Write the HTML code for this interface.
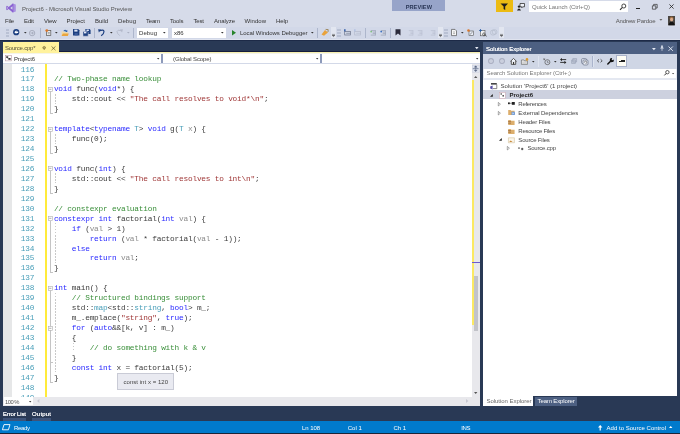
<!DOCTYPE html>
<html lang="en"><head><meta charset="utf-8"><title>Project6 - Microsoft Visual Studio Preview</title>
<style>
html,body{margin:0;padding:0;background:#293955;}
#r{position:relative;width:680px;height:434px;overflow:hidden;will-change:transform;font-family:"Liberation Sans",sans-serif;}
#r>div,#r>svg,#r>span{position:absolute;display:block;}
#r>svg{overflow:visible;}
.t{white-space:pre;}
.ln{font-family:"Liberation Mono",monospace;font-size:7.8px;line-height:10px;letter-spacing:-0.211px;color:#4a9fb9;text-align:right;white-space:pre;}
.cd{font-family:"Liberation Mono",monospace;font-size:7.8px;line-height:10px;letter-spacing:-0.211px;color:#3c3c3c;white-space:pre;}
.cd i{font-style:normal}
.k{color:#2a2aff}.cd .t{color:#4a9fb9}.s{color:#a03838}.c{color:#3a8f3a}.p{color:#8c8c8c}
</style></head>
<body><div id="r">
<div style="left:0px;top:0px;width:680px;height:40px;background:#d6dbe9;"></div>
<div style="left:0px;top:27px;width:680px;height:11.6px;background:#d2d8e8;"></div>
<div style="left:0px;top:38.6px;width:680px;height:0.9px;background:#dfe3ee;"></div>
<div style="left:0px;top:39.5px;width:680px;height:394.5px;background:#293955;"></div>
<span class="t" style="left:22px;top:5px;font-size:6px;line-height:8px;color:#555;letter-spacing:-0.031px;">Project6 - Microsoft Visual Studio Preview</span>
<svg style="left:6px;top:3px" width="10" height="10" viewBox="0 0 10 10"><path d="M6.6 0.4 L9.8 1.6 V8.4 L6.6 9.6 Z" fill="#a88fe0"/><path d="M6.8 0.4 L7.4 0.8 V9.2 L6.8 9.6 L2.6 5.9 L1 7.2 L0.3 6.8 V3.2 L1 2.8 L2.6 4.1 Z M6.6 3.2 L4.2 5 L6.6 6.8 Z M1.2 4.1 V5.9 L2.2 5 Z" fill="#8b63d2" fill-rule="evenodd"/></svg>
<div style="left:391.75px;top:0px;width:53.25px;height:11.25px;background:#97a4c9;"></div>
<span class="t" style="left:405.7px;top:3px;font-size:5.6px;line-height:8px;color:#2a3757;letter-spacing:0.079px;font-weight:bold;">PREVIEW</span>
<div style="left:496.2px;top:0px;width:16.6px;height:12.4px;background:#ecbb12;"></div>
<svg style="left:500px;top:2.5px" width="9" height="8" viewBox="0 0 9 8"><path d="M0.5 0.5 H8 L5.2 3.6 V7 L3.6 6 V3.6 Z" fill="#1e1e1e"/></svg>
<svg style="left:517px;top:2.5px" width="8" height="8" viewBox="0 0 8 8"><path d="M3 0.5 H7.5 V3.8 H5.6 L4.8 4.8 V3.8 H3 Z" fill="#eef1f8" stroke="#333" stroke-width="0.8"/><circle cx="2" cy="3.6" r="1.2" fill="#222"/><path d="M0 7.4 Q2 3.6 4 7.4 Z" fill="#222"/></svg>
<div style="left:529.3px;top:1.2px;width:98.7px;height:10.8px;background:#fff;"></div>
<span class="t" style="left:532px;top:3px;font-size:6px;line-height:8px;color:#777;letter-spacing:-0.093px;">Quick Launch (Ctrl+Q)</span>
<svg style="left:619px;top:3px" width="8" height="8" viewBox="0 0 8 8"><circle cx="4.8" cy="3" r="2" fill="none" stroke="#333" stroke-width="0.9"/><path d="M3.4 4.4 L1 6.8" stroke="#333" stroke-width="1.1"/></svg>
<div style="left:635.6px;top:7.6px;width:4.6px;height:1.0px;background:#222;"></div>
<svg style="left:652px;top:4px" width="5.6" height="5.6" viewBox="0 0 5.6 5.6"><path d="M0.4 1.8 H3.8 V5.2 H0.4 Z M1.6 1.8 V0.4 H5.2 V4 H3.8" fill="none" stroke="#333" stroke-width="0.7"/></svg>
<svg style="left:669px;top:4.3px" width="5" height="5" viewBox="0 0 5 5"><path d="M0.4 0.4 L4.6 4.6 M4.6 0.4 L0.4 4.6" stroke="#222" stroke-width="0.8"/></svg>
<span class="t" style="left:615.75px;top:17px;font-size:6px;line-height:8px;color:#555;letter-spacing:-0.134px;">Andrew Pardoe</span>
<svg style="left:659.3px;top:19px" width="4" height="3" viewBox="0 0 4 3"><path d="M0.4 0 H3.4 L1.9 1.7 Z" fill="#666"/></svg>
<div style="left:668px;top:15.5px;width:7px;height:9.3px;background:#3a3836;"></div>
<svg style="left:668px;top:15.5px" width="7" height="9.3" viewBox="0 0 7 9.3"><rect width="7" height="9.3" fill="#4a4642"/><ellipse cx="3.6" cy="2.6" rx="1.9" ry="2.2" fill="#9a6a40"/><ellipse cx="3.6" cy="3.6" rx="1.5" ry="1.9" fill="#d9ad8f"/><path d="M0.6 9.3 Q0.8 5.8 3.6 5.8 Q6.4 5.8 6.6 9.3 Z" fill="#141414"/></svg>
<span class="t" style="left:5px;top:17px;font-size:6px;line-height:8px;color:#333;letter-spacing:-0.223px;">File</span>
<span class="t" style="left:24px;top:17px;font-size:6px;line-height:8px;color:#333;letter-spacing:-0.113px;">Edit</span>
<span class="t" style="left:44px;top:17px;font-size:6px;line-height:8px;color:#333;letter-spacing:-0.132px;">View</span>
<span class="t" style="left:66.5px;top:17px;font-size:6px;line-height:8px;color:#333;letter-spacing:-0.029px;">Project</span>
<span class="t" style="left:95px;top:17px;font-size:6px;line-height:8px;color:#333;letter-spacing:-0.086px;">Build</span>
<span class="t" style="left:118px;top:17px;font-size:6px;line-height:8px;color:#333;letter-spacing:0.08px;">Debug</span>
<span class="t" style="left:146px;top:17px;font-size:6px;line-height:8px;color:#333;letter-spacing:-0.224px;">Team</span>
<span class="t" style="left:170px;top:17px;font-size:6px;line-height:8px;color:#333;letter-spacing:-0.127px;">Tools</span>
<span class="t" style="left:193.5px;top:17px;font-size:6px;line-height:8px;color:#333;letter-spacing:-0.168px;">Test</span>
<span class="t" style="left:214px;top:17px;font-size:6px;line-height:8px;color:#333;letter-spacing:-0.058px;">Analyze</span>
<span class="t" style="left:244.5px;top:17px;font-size:6px;line-height:8px;color:#333;letter-spacing:0.032px;">Window</span>
<span class="t" style="left:276px;top:17px;font-size:6px;line-height:8px;color:#333;letter-spacing:-0.113px;">Help</span>
<div style="left:5.5px;top:28.5px;width:3.5px;height:8.5px;background:repeating-linear-gradient(180deg,#b3bbcf 0 0.7px,transparent 0.7px 1.5px);opacity:.8"></div>
<svg style="left:12.8px;top:29.400000000000002px" width="6.4" height="6.4" viewBox="0 0 6.4 6.4"><circle cx="3.2" cy="3.2" r="3.1" fill="#1c3f80"/><path d="M1.3 3.2 L3.4 1.3 V2.5 H5.2 V3.9 H3.4 V5.1 Z" fill="#fff"/></svg>
<svg style="left:23.5px;top:31.8px" width="2.6" height="1.5" viewBox="0 0 2.6 1.5"><path d="M0 0 H2.6 L1.3 1.5 Z" fill="#333"/></svg>
<svg style="left:29.4px;top:29.5px" width="6.2" height="6.2" viewBox="0 0 6.2 6.2"><circle cx="3.1" cy="3.1" r="2.7" fill="none" stroke="#a3a9ba" stroke-width="0.9"/><path d="M5 3.1 L3 1.5 V2.6 H1.4 V3.6 H3 V4.7 Z" fill="#a9afc0"/></svg>
<div style="left:39.5px;top:28px;width:0.6px;height:9.5px;background:#adb6cc;"></div>
<svg style="left:44.5px;top:29.0px" width="7" height="7.2" viewBox="0 0 7 7.2"><rect x="1.6" y="1.6" width="4.2" height="5" fill="#f4f4f4" stroke="#555" stroke-width="0.7"/><path d="M2.6 3.4 H4.8 M2.6 4.8 H4.8" stroke="#666" stroke-width="0.6"/><circle cx="1.8" cy="1.6" r="1.4" fill="#d9762b"/></svg>
<svg style="left:54.8px;top:31.8px" width="2.6" height="1.5" viewBox="0 0 2.6 1.5"><path d="M0 0 H2.6 L1.3 1.5 Z" fill="#333"/></svg>
<svg style="left:61px;top:29.0px" width="7.6" height="7.2" viewBox="0 0 7.6 7.2"><path d="M0.6 2.4 H3 L3.8 3.2 H6.8 V6.9 H0.6 Z" fill="#f1dca6"/><path d="M0.6 6.9 L1.8 4.6 H7.8 L6.8 6.9 Z" fill="#e9a53f"/><path d="M2.4 2 Q4 -0.2 5.6 1.4 L6.3 0.7 V2.9 H4.1 L4.8 2.2 Q4 1.4 3.2 2.4 Z" fill="#2f64ad"/></svg>
<svg style="left:73px;top:29.400000000000002px" width="6.4" height="6.4" viewBox="0 0 6.4 6.4"><path d="M0 0 H5.2 L6.4 1.2 V6.4 H0 Z" fill="#1c3f80"/><rect x="1.3" y="0.6" width="3.2" height="2" fill="#dfe6f5"/><rect x="1.6" y="4" width="3.2" height="2.4" fill="#3a5a9a"/></svg>
<svg style="left:83.2px;top:29.0px" width="7.6" height="7.2" viewBox="0 0 7.6 7.2"><path d="M2.4 0 H6.6 L7.6 1 V5 H2.4 Z" fill="#1c3f80"/><rect x="3.5" y="0.5" width="2.4" height="1.5" fill="#dfe6f5"/><path d="M0 2.4 H4.2 L5.2 3.4 V7.2 H0 Z" fill="#1c3f80" stroke="#d6dbe9" stroke-width="0.5"/><rect x="1" y="2.9" width="2.4" height="1.5" fill="#dfe6f5"/></svg>
<div style="left:93.5px;top:28px;width:0.6px;height:9.5px;background:#adb6cc;"></div>
<svg style="left:98.3px;top:29.200000000000003px" width="7" height="7" viewBox="0 0 7 7"><path d="M1.6 1.8 Q5.6 0.2 6 2.6 Q6.1 4.4 3.2 6.7" fill="none" stroke="#1c3f80" stroke-width="1.2"/><path d="M0.1 0.3 L3.2 0.6 L0.9 3.4 Z" fill="#1c3f80"/></svg>
<svg style="left:109.5px;top:31.9px" width="2.6" height="1.5" viewBox="0 0 2.6 1.5"><path d="M0 0 H2.6 L1.3 1.5 Z" fill="#333"/></svg>
<svg style="left:115.5px;top:29.200000000000003px" width="7" height="7" viewBox="0 0 7 7"><path d="M5.4 1.8 Q1.4 0.2 1 2.6 Q0.9 4.4 3.8 6.7" fill="none" stroke="#b3b9ca" stroke-width="0.9"/><path d="M6.9 0.3 L3.8 0.6 L6.1 3.4 Z" fill="#b3b9ca"/></svg>
<svg style="left:126.7px;top:31.9px" width="2.6" height="1.5" viewBox="0 0 2.6 1.5"><path d="M0 0 H2.6 L1.3 1.5 Z" fill="#a9afc0"/></svg>
<div style="left:132.5px;top:28px;width:0.6px;height:9.5px;background:#adb6cc;"></div>
<div style="left:137px;top:28px;width:30.5px;height:9.5px;background:#fff;"></div>
<span class="t" style="left:139px;top:29px;font-size:6px;line-height:8px;color:#333;letter-spacing:0.08px;">Debug</span>
<svg style="left:163px;top:32px" width="2.6" height="1.5" viewBox="0 0 2.6 1.5"><path d="M0 0 H2.6 L1.3 1.5 Z" fill="#333"/></svg>
<div style="left:172px;top:28px;width:53.5px;height:9.5px;background:#fff;"></div>
<span class="t" style="left:174px;top:29px;font-size:6px;line-height:8px;color:#333;letter-spacing:-0.087px;">x86</span>
<svg style="left:221px;top:32px" width="2.6" height="1.5" viewBox="0 0 2.6 1.5"><path d="M0 0 H2.6 L1.3 1.5 Z" fill="#333"/></svg>
<svg style="left:232px;top:29.8px" width="4" height="5.6" viewBox="0 0 4 5.6"><path d="M0 0 L4 2.8 L0 5.6 Z" fill="#26842a"/></svg>
<span class="t" style="left:240px;top:29px;font-size:6px;line-height:8px;color:#333;letter-spacing:-0.042px;">Local Windows Debugger</span>
<svg style="left:310.5px;top:32px" width="2.6" height="1.5" viewBox="0 0 2.6 1.5"><path d="M0 0 H2.6 L1.3 1.5 Z" fill="#333"/></svg>
<div style="left:316.5px;top:28px;width:0.6px;height:9.5px;background:#adb6cc;"></div>
<svg style="left:321px;top:29.0px" width="7.5" height="7.2" viewBox="0 0 7.5 7.2"><path d="M0.5 5.5 L4 1 L7 3.5 L3 6.8 Z" fill="#e9a23b"/><path d="M4.6 0.4 L7.2 0.6 L7 3" fill="none" stroke="#8a6a2a" stroke-width="0.7"/></svg>
<div style="left:330.8px;top:26.5px;width:5.4px;height:11.5px;background:#e2e6f0;"></div>
<svg style="left:332px;top:34px" width="3" height="2.6" viewBox="0 0 3 2.6"><path d="M0 0.4 H3 M0 1.2 H3 L1.5 2.6 Z" fill="#444" stroke="#444" stroke-width="0.4"/></svg>
<div style="left:337px;top:28.5px;width:3.5px;height:8.5px;background:repeating-linear-gradient(180deg,#b3bbcf 0 0.7px,transparent 0.7px 1.5px);opacity:.8"></div>
<svg style="left:343.6px;top:29.400000000000002px" width="7" height="6.6" viewBox="0 0 7 6.6"><rect x="0.7" y="2.6" width="5.8" height="3.4" fill="none" stroke="#6a7388" stroke-width="0.7"/><path d="M2.2 4.3 H6.2" stroke="#6a7388" stroke-width="0.6"/><rect x="0.2" y="0.2" width="1.3" height="2.2" fill="#1f4fa0"/></svg>
<svg style="left:354px;top:29.400000000000002px" width="7" height="6.6" viewBox="0 0 7 6.6"><rect x="0.7" y="2.6" width="5.8" height="3.4" fill="none" stroke="#b4bacb" stroke-width="0.7"/><path d="M2.2 4.3 H6.2" stroke="#b4bacb" stroke-width="0.6"/><rect x="0.2" y="0.2" width="1.3" height="2.2" fill="#aebfe0"/></svg>
<div style="left:365px;top:28px;width:0.6px;height:9.5px;background:#adb6cc;"></div>
<svg style="left:369.6px;top:29.8px" width="6" height="6" viewBox="0 0 6 6"><path d="M0.8 0.6 H5.6 M2.7 2.1 H5.6 M2.7 3.6 H5.6 M0.8 5.1 H5.6" stroke="#8d95a8" stroke-width="0.6"/><path d="M5.5 0.4 V5.3" stroke="#8d95a8" stroke-width="0.5"/><circle cx="1.2" cy="1.6" r="0.9" fill="#7fbf7f"/></svg>
<svg style="left:379.8px;top:29.8px" width="6" height="6" viewBox="0 0 6 6"><path d="M0.8 0.6 H5.6 M2.7 2.1 H5.6 M2.7 3.6 H5.6 M0.8 5.1 H5.6" stroke="#8d95a8" stroke-width="0.6"/><path d="M5.5 0.4 V5.3" stroke="#8d95a8" stroke-width="0.5"/><circle cx="1.2" cy="1.6" r="0.9" fill="#3a6fc0"/></svg>
<div style="left:390px;top:28px;width:0.6px;height:9.5px;background:#adb6cc;"></div>
<svg style="left:395px;top:29.200000000000003px" width="6" height="6.8" viewBox="0 0 6 6.8"><path d="M0.5 0.3 H5.5 V6.6 L3 4.6 L0.5 6.6 Z" fill="#2a2a3a"/></svg>
<svg style="left:407.5px;top:29.8px" width="5.5" height="6" viewBox="0 0 5.5 6"><path d="M0.8 0.6 H5.1 M2.475 2.1 H5.1 M2.475 3.6 H5.1 M0.8 5.1 H5.1" stroke="#b5bbcc" stroke-width="0.6"/><path d="M5.0 0.4 V5.3" stroke="#b5bbcc" stroke-width="0.5"/></svg>
<svg style="left:417px;top:29.8px" width="5.5" height="6" viewBox="0 0 5.5 6"><path d="M0.8 0.6 H5.1 M2.475 2.1 H5.1 M2.475 3.6 H5.1 M0.8 5.1 H5.1" stroke="#b5bbcc" stroke-width="0.6"/><path d="M5.0 0.4 V5.3" stroke="#b5bbcc" stroke-width="0.5"/></svg>
<svg style="left:429.5px;top:29.8px" width="5.5" height="6" viewBox="0 0 5.5 6"><path d="M0.8 0.6 H5.1 M2.475 2.1 H5.1 M2.475 3.6 H5.1 M0.8 5.1 H5.1" stroke="#b5bbcc" stroke-width="0.6"/><path d="M5.0 0.4 V5.3" stroke="#b5bbcc" stroke-width="0.5"/></svg>
<div style="left:437.6px;top:26.5px;width:5.4px;height:11.5px;background:#e2e6f0;"></div>
<svg style="left:438.8px;top:34px" width="3" height="2.6" viewBox="0 0 3 2.6"><path d="M0 0.4 H3 M0 1.2 H3 L1.5 2.6 Z" fill="#444" stroke="#444" stroke-width="0.4"/></svg>
<div style="left:444.3px;top:28.5px;width:3.5px;height:8.5px;background:repeating-linear-gradient(180deg,#b3bbcf 0 0.7px,transparent 0.7px 1.5px);opacity:.8"></div>
<svg style="left:451px;top:29.1px" width="6" height="7" viewBox="0 0 6 7"><path d="M0.5 0.4 H4 L5.5 1.9 V6.6 H0.5 Z" fill="#f6f6f6" stroke="#555" stroke-width="0.7"/><path d="M2 3 H4 M2 4.6 H4" stroke="#777" stroke-width="0.5"/></svg>
<svg style="left:461px;top:32px" width="2.6" height="1.5" viewBox="0 0 2.6 1.5"><path d="M0 0 H2.6 L1.3 1.5 Z" fill="#333"/></svg>
<svg style="left:467px;top:29.1px" width="7.5" height="7" viewBox="0 0 7.5 7"><rect x="2" y="2" width="4.6" height="4.6" fill="#e9eef8" stroke="#555" stroke-width="0.6"/><path d="M2.8 5.6 L5.6 3" stroke="#555" stroke-width="0.6"/><circle cx="1.5" cy="1.5" r="1.3" fill="#d9762b"/></svg>
<svg style="left:479px;top:28.8px" width="8.5" height="7.6" viewBox="0 0 8.5 7.6"><rect x="1.6" y="1.6" width="4.4" height="5.2" fill="#f2f2f2" stroke="#555" stroke-width="0.6"/><path d="M4.6 5 L7.8 7.4 M6 4.4 A1.4 1.4 0 1 1 5.9 4.3" fill="none" stroke="#444" stroke-width="0.7"/><path d="M1.5 0 V3 M0 1.5 H3" stroke="#2a5ea8" stroke-width="0.8"/></svg>
<svg style="left:490px;top:29.200000000000003px" width="7.5" height="6.8" viewBox="0 0 7.5 6.8"><circle cx="3" cy="3.6" r="2.6" fill="none" stroke="#b5bbcc" stroke-width="0.7"/><circle cx="4.6" cy="3" r="2.4" fill="none" stroke="#b5bbcc" stroke-width="0.7"/></svg>
<div style="left:498.6px;top:26.5px;width:5.4px;height:11.5px;background:#e2e6f0;"></div>
<svg style="left:499.8px;top:34px" width="3" height="2.6" viewBox="0 0 3 2.6"><path d="M0 0.4 H3 M0 1.2 H3 L1.5 2.6 Z" fill="#444" stroke="#444" stroke-width="0.4"/></svg>
<svg style="left:475.2px;top:47.3px" width="3.6" height="2.2" viewBox="0 0 3.6 2.2"><path d="M0 0 H3.6 L1.8 2.2 Z" fill="#e6ebf5"/></svg>
<div style="left:0px;top:39.5px;width:680px;height:0.8px;background:#1d2a47;"></div>
<div style="left:3px;top:50.6px;width:477px;height:1.0px;background:#151d3d;"></div>
<div style="left:3px;top:51.6px;width:477px;height:1.3px;background:#f6efae;"></div>
<div style="left:3px;top:42.2px;width:56px;height:10.7px;background:#fff29d;"></div>
<span class="t" style="left:5px;top:44px;font-size:6px;line-height:8px;color:#55523a;letter-spacing:-0.219px;">Source.cpp*</span>
<svg style="left:42px;top:46px" width="4.5" height="4" viewBox="0 0 4.5 4"><circle cx="2.2" cy="1.6" r="1.2" fill="none" stroke="#6b5e2a" stroke-width="0.6"/><path d="M0.6 1.8 H3.8 M2.2 2.6 V4" stroke="#6b5e2a" stroke-width="0.6"/></svg>
<svg style="left:51px;top:46px" width="5" height="4.6" viewBox="0 0 5 4.6"><path d="M0.5 0.4 L4.5 4.2 M4.5 0.4 L0.5 4.2" stroke="#5a5228" stroke-width="0.7"/></svg>
<div style="left:3px;top:52.9px;width:477px;height:11.5px;background:#fff;"></div>
<div style="left:3px;top:52.9px;width:477px;height:0.7px;background:#f4f4ea;"></div>
<div style="left:3px;top:63px;width:477px;height:1.4px;background:#d3d9e8;"></div>
<div style="left:161px;top:54px;width:1.8px;height:9.4px;background:#8d9aba;"></div>
<div style="left:320px;top:54px;width:1.8px;height:9.4px;background:#8d9aba;"></div>
<svg style="left:5.2px;top:55.3px" width="6.6" height="6.2" viewBox="0 0 6.6 6.2"><rect x="0.3" y="0.3" width="6" height="5.6" fill="#fff" stroke="#b08a96" stroke-width="0.5"/><rect x="1.2" y="1.3" width="2" height="1.6" fill="#333"/><rect x="3.4" y="3" width="2.2" height="1.8" fill="#333"/><path d="M2.2 3 L3.4 3.8" stroke="#333" stroke-width="0.5"/></svg>
<span class="t" style="left:14px;top:55px;font-size:6px;line-height:8px;color:#333;letter-spacing:-0.145px;">Project6</span>
<svg style="left:157px;top:58.2px" width="2.4" height="1.5" viewBox="0 0 2.4 1.5"><path d="M0 0 H2.4 L1.2 1.5 Z" fill="#333"/></svg>
<span class="t" style="left:173px;top:55px;font-size:6px;line-height:8px;color:#444;letter-spacing:-0.117px;">(Global Scope)</span>
<svg style="left:316.2px;top:58.2px" width="2.4" height="1.5" viewBox="0 0 2.4 1.5"><path d="M0 0 H2.4 L1.2 1.5 Z" fill="#333"/></svg>
<svg style="left:476px;top:58.2px" width="2.4" height="1.5" viewBox="0 0 2.4 1.5"><path d="M0 0 H2.4 L1.2 1.5 Z" fill="#333"/></svg>
<div style="left:3px;top:64.4px;width:477px;height:332.6px;background:#fff;"></div>
<div style="left:3px;top:64.2px;width:8.8px;height:332.8px;background:#e6e7e8;"></div>
<div style="left:45px;top:64.2px;width:2px;height:332.8px;background:#ffeb3b;"></div>
<div style="left:471.5px;top:64.2px;width:8.5px;height:332.8px;background:#e8e8ec;"></div>
<div style="left:472px;top:80px;width:2.1px;height:245px;background:#fbe963;"></div>
<div style="left:474.1px;top:276px;width:3.5px;height:55.3px;background:#c2c3c9;"></div>
<div style="left:471.5px;top:262px;width:8.5px;height:0.8px;background:#6a5acd;"></div>
<svg style="left:472px;top:64.5px" width="7.5" height="7.5" viewBox="0 0 7.5 7.5"><rect x="0.2" y="0.2" width="7" height="7" fill="#dfe4ef" stroke="#c5cbdb" stroke-width="0.4"/><path d="M3.7 0.8 L5 2.2 H2.4 Z M3.7 6.6 L5 5.2 H2.4 Z M3.7 2 V5.4" stroke="#54617f" stroke-width="0.5" fill="#54617f"/><path d="M0.8 3.7 H6.6" stroke="#54617f" stroke-width="0.7"/></svg>
<svg style="left:474px;top:76px" width="3.4" height="2" viewBox="0 0 3.4 2"><path d="M0 2 H3.4 L1.7 0 Z" fill="#555"/></svg>
<svg style="left:474px;top:391.6px" width="3.4" height="2" viewBox="0 0 3.4 2"><path d="M0 0 H3.4 L1.7 2 Z" fill="#555"/></svg>
<div style="left:3px;top:397px;width:477px;height:8.8px;background:#e8e8ec;"></div>
<div style="left:3.6px;top:397.4px;width:29.4px;height:8.0px;background:#fff;"></div>
<span class="t" style="left:5px;top:398px;font-size:5.8px;line-height:8px;color:#555;letter-spacing:-0.486px;">100 %</span>
<svg style="left:29px;top:400.8px" width="2.4" height="1.5" viewBox="0 0 2.4 1.5"><path d="M0 0 H2.4 L1.2 1.5 Z" fill="#333"/></svg>
<svg style="left:36.5px;top:399.3px" width="2.4" height="4" viewBox="0 0 2.4 4"><path d="M2.4 0 V4 L0 2 Z" fill="#c8c9d2"/></svg>
<svg style="left:466px;top:399.3px" width="2.4" height="4" viewBox="0 0 2.4 4"><path d="M0 0 V4 L2.4 2 Z" fill="#c8c9d2"/></svg>
<span class="ln" style="left:15.6px;top:65px;width:18.6px;">116</span>
<span class="ln" style="left:15.6px;top:74px;width:18.6px;">117</span>
<span class="cd" style="left:53.9px;top:74px;"><i class="c">// Two-phase name lookup</i></span>
<span class="ln" style="left:15.6px;top:84px;width:18.6px;">118</span>
<span class="cd" style="left:53.9px;top:84px;"><i class="k">void</i> func(<i class="k">void</i>*) {</span>
<span class="ln" style="left:15.6px;top:94px;width:18.6px;">119</span>
<span class="cd" style="left:53.9px;top:94px;">    std::cout &lt;&lt; <i class="s">"The call resolves to void*\n"</i>;</span>
<span class="ln" style="left:15.6px;top:104px;width:18.6px;">120</span>
<span class="cd" style="left:53.9px;top:104px;">}</span>
<span class="ln" style="left:15.6px;top:114px;width:18.6px;">121</span>
<span class="ln" style="left:15.6px;top:124px;width:18.6px;">122</span>
<span class="cd" style="left:53.9px;top:124px;"><i class="k">template</i>&lt;<i class="k">typename</i> <i class="t">T</i>&gt; <i class="k">void</i> g(<i class="t">T</i> <i class="p">x</i>) {</span>
<span class="ln" style="left:15.6px;top:134px;width:18.6px;">123</span>
<span class="cd" style="left:53.9px;top:134px;">    func(0);</span>
<span class="ln" style="left:15.6px;top:144px;width:18.6px;">124</span>
<span class="cd" style="left:53.9px;top:144px;">}</span>
<span class="ln" style="left:15.6px;top:154px;width:18.6px;">125</span>
<span class="ln" style="left:15.6px;top:164px;width:18.6px;">126</span>
<span class="cd" style="left:53.9px;top:164px;"><i class="k">void</i> func(<i class="k">int</i>) {</span>
<span class="ln" style="left:15.6px;top:174px;width:18.6px;">127</span>
<span class="cd" style="left:53.9px;top:174px;">    std::cout &lt;&lt; <i class="s">"The call resolves to int\n"</i>;</span>
<span class="ln" style="left:15.6px;top:184px;width:18.6px;">128</span>
<span class="cd" style="left:53.9px;top:184px;">}</span>
<span class="ln" style="left:15.6px;top:194px;width:18.6px;">129</span>
<span class="ln" style="left:15.6px;top:204px;width:18.6px;">130</span>
<span class="cd" style="left:53.9px;top:204px;"><i class="c">// constexpr evaluation</i></span>
<span class="ln" style="left:15.6px;top:214px;width:18.6px;">131</span>
<span class="cd" style="left:53.9px;top:214px;"><i class="k">constexpr</i> <i class="k">int</i> factorial(<i class="k">int</i> <i class="p">val</i>) {</span>
<span class="ln" style="left:15.6px;top:224px;width:18.6px;">132</span>
<span class="cd" style="left:53.9px;top:224px;">    <i class="k">if</i> (<i class="p">val</i> &gt; 1)</span>
<span class="ln" style="left:15.6px;top:234px;width:18.6px;">133</span>
<span class="cd" style="left:53.9px;top:234px;">        <i class="k">return</i> (<i class="p">val</i> * factorial(<i class="p">val</i> - 1));</span>
<span class="ln" style="left:15.6px;top:244px;width:18.6px;">134</span>
<span class="cd" style="left:53.9px;top:244px;">    <i class="k">else</i></span>
<span class="ln" style="left:15.6px;top:253px;width:18.6px;">135</span>
<span class="cd" style="left:53.9px;top:253px;">        <i class="k">return</i> <i class="p">val</i>;</span>
<span class="ln" style="left:15.6px;top:263px;width:18.6px;">136</span>
<span class="cd" style="left:53.9px;top:263px;">}</span>
<span class="ln" style="left:15.6px;top:273px;width:18.6px;">137</span>
<span class="ln" style="left:15.6px;top:283px;width:18.6px;">138</span>
<span class="cd" style="left:53.9px;top:283px;"><i class="k">int</i> main() {</span>
<span class="ln" style="left:15.6px;top:293px;width:18.6px;">139</span>
<span class="cd" style="left:53.9px;top:293px;">    <i class="c">// Structured bindings support</i></span>
<span class="ln" style="left:15.6px;top:303px;width:18.6px;">140</span>
<span class="cd" style="left:53.9px;top:303px;">    std::<i class="t">map</i>&lt;std::<i class="t">string</i>, <i class="k">bool</i>&gt; m_;</span>
<span class="ln" style="left:15.6px;top:313px;width:18.6px;">141</span>
<span class="cd" style="left:53.9px;top:313px;">    m_.emplace(<i class="s">"string"</i>, <i class="k">true</i>);</span>
<span class="ln" style="left:15.6px;top:323px;width:18.6px;">142</span>
<span class="cd" style="left:53.9px;top:323px;">    <i class="k">for</i> (<i class="k">auto</i>&amp;&amp;[k, v] : m_)</span>
<span class="ln" style="left:15.6px;top:333px;width:18.6px;">143</span>
<span class="cd" style="left:53.9px;top:333px;">    {</span>
<span class="ln" style="left:15.6px;top:343px;width:18.6px;">144</span>
<span class="cd" style="left:53.9px;top:343px;">        <i class="c">// do something with k &amp; v</i></span>
<span class="ln" style="left:15.6px;top:353px;width:18.6px;">145</span>
<span class="cd" style="left:53.9px;top:353px;">    }</span>
<span class="ln" style="left:15.6px;top:363px;width:18.6px;">146</span>
<span class="cd" style="left:53.9px;top:363px;">    <i class="k">const</i> <i class="k">int</i> x = factorial(5);</span>
<span class="ln" style="left:15.6px;top:373px;width:18.6px;">147</span>
<span class="cd" style="left:53.9px;top:373px;">}</span>
<span class="ln" style="left:15.6px;top:383px;width:18.6px;">148</span>
<span class="ln" style="left:15.6px;top:393px;width:18.6px;">149</span>
<svg style="left:48.2px;top:86.79px" width="4.6" height="4.6" viewBox="0 0 4.6 4.6"><rect x="0.3" y="0.3" width="4" height="4" fill="#fff" stroke="#aeaeae" stroke-width="0.6"/><path d="M1.2 2.3 H3.4" stroke="#777" stroke-width="0.6"/></svg>
<div style="left:50.2px;top:91.394px;width:0.6px;height:22.29px;background:#c4c4c4;"></div>
<div style="left:50.2px;top:113.08800000000001px;width:2.4px;height:0.6px;background:#c4c4c4;"></div>
<svg style="left:48.2px;top:126.58px" width="4.6" height="4.6" viewBox="0 0 4.6 4.6"><rect x="0.3" y="0.3" width="4" height="4" fill="#fff" stroke="#aeaeae" stroke-width="0.6"/><path d="M1.2 2.3 H3.4" stroke="#777" stroke-width="0.6"/></svg>
<div style="left:50.2px;top:131.182px;width:0.6px;height:22.29px;background:#c4c4c4;"></div>
<div style="left:50.2px;top:152.876px;width:2.4px;height:0.6px;background:#c4c4c4;"></div>
<svg style="left:48.2px;top:166.37px" width="4.6" height="4.6" viewBox="0 0 4.6 4.6"><rect x="0.3" y="0.3" width="4" height="4" fill="#fff" stroke="#aeaeae" stroke-width="0.6"/><path d="M1.2 2.3 H3.4" stroke="#777" stroke-width="0.6"/></svg>
<div style="left:50.2px;top:170.97px;width:0.6px;height:22.29px;background:#c4c4c4;"></div>
<div style="left:50.2px;top:192.664px;width:2.4px;height:0.6px;background:#c4c4c4;"></div>
<svg style="left:48.2px;top:216.1px" width="4.6" height="4.6" viewBox="0 0 4.6 4.6"><rect x="0.3" y="0.3" width="4" height="4" fill="#fff" stroke="#aeaeae" stroke-width="0.6"/><path d="M1.2 2.3 H3.4" stroke="#777" stroke-width="0.6"/></svg>
<div style="left:50.2px;top:220.70499999999998px;width:0.6px;height:52.13px;background:#c4c4c4;"></div>
<div style="left:50.2px;top:272.23999999999995px;width:2.4px;height:0.6px;background:#c4c4c4;"></div>
<svg style="left:48.2px;top:285.73px" width="4.6" height="4.6" viewBox="0 0 4.6 4.6"><rect x="0.3" y="0.3" width="4" height="4" fill="#fff" stroke="#aeaeae" stroke-width="0.6"/><path d="M1.2 2.3 H3.4" stroke="#777" stroke-width="0.6"/></svg>
<div style="left:50.2px;top:290.33399999999995px;width:0.6px;height:91.92px;background:#c4c4c4;"></div>
<div style="left:50.2px;top:381.6569999999999px;width:2.4px;height:0.6px;background:#c4c4c4;"></div>
<svg style="left:48.2px;top:325.52px" width="4.6" height="4.6" viewBox="0 0 4.6 4.6"><rect x="0.3" y="0.3" width="4" height="4" fill="#fff" stroke="#aeaeae" stroke-width="0.6"/><path d="M1.2 2.3 H3.4" stroke="#777" stroke-width="0.6"/></svg>
<div style="left:50.2px;top:361.763px;width:2.4px;height:0.6px;background:#c4c4c4;"></div>
<div style="left:55.4px;top:93.87px;width:0.6px;height:9.95px;background:repeating-linear-gradient(180deg,#c9c9c9 0 0.7px,transparent 0.7px 1.5px)"></div>
<div style="left:55.4px;top:133.66px;width:0.6px;height:9.95px;background:repeating-linear-gradient(180deg,#c9c9c9 0 0.7px,transparent 0.7px 1.5px)"></div>
<div style="left:55.4px;top:173.44px;width:0.6px;height:9.95px;background:repeating-linear-gradient(180deg,#c9c9c9 0 0.7px,transparent 0.7px 1.5px)"></div>
<div style="left:55.4px;top:223.18px;width:0.6px;height:39.79px;background:repeating-linear-gradient(180deg,#c9c9c9 0 0.7px,transparent 0.7px 1.5px)"></div>
<div style="left:55.4px;top:292.81px;width:0.6px;height:79.58px;background:repeating-linear-gradient(180deg,#c9c9c9 0 0.7px,transparent 0.7px 1.5px)"></div>
<div style="left:73.4px;top:342.54px;width:0.6px;height:9.95px;background:repeating-linear-gradient(180deg,#c9c9c9 0 0.7px,transparent 0.7px 1.5px)"></div>
<div style="left:3px;top:397px;width:42px;height:8.8px;background:#e8e8ec;"></div>
<div style="left:3.6px;top:397.4px;width:29.4px;height:8.0px;background:#fff;"></div>
<span class="t" style="left:5px;top:398px;font-size:5.8px;line-height:8px;color:#555;letter-spacing:-0.486px;">100 %</span>
<svg style="left:29px;top:400.8px" width="2.4" height="1.5" viewBox="0 0 2.4 1.5"><path d="M0 0 H2.4 L1.2 1.5 Z" fill="#333"/></svg>
<svg style="left:36.5px;top:399.3px" width="2.4" height="4" viewBox="0 0 2.4 4"><path d="M2.4 0 V4 L0 2 Z" fill="#c8c9d2"/></svg>
<div style="left:117px;top:372.5px;width:57.2px;height:17px;background:#e9eaf1;border:0.5px solid #c9cbd6;box-sizing:border-box"></div>
<span class="t" style="left:123.5px;top:378px;font-size:6px;line-height:8px;color:#444;letter-spacing:0.04px;">const int x = 120</span>
<div style="left:483.4px;top:42.3px;width:193.2px;height:11.4px;background:#4d6082;"></div>
<span class="t" style="left:486px;top:45px;font-size:6px;line-height:8px;color:#fff;letter-spacing:-0.012px;text-shadow:0 0 0.4px #fff;">Solution Explorer</span>
<svg style="left:652px;top:47.6px" width="3.8" height="2.2" viewBox="0 0 3.8 2.2"><path d="M0 0 H3.8 L1.9 2.2 Z" fill="#e6ebf5"/></svg>
<svg style="left:659.6px;top:45.2px" width="4" height="6" viewBox="0 0 4 6"><path d="M1.2 0.4 H2.8 V3 H1.2 Z" fill="#e6ebf5"/><path d="M0.3 3.2 H3.7 M2 3.2 V5.8" stroke="#e6ebf5" stroke-width="0.7"/></svg>
<svg style="left:668px;top:45.8px" width="5.2" height="5.2" viewBox="0 0 5.2 5.2"><path d="M0.5 0.5 L4.9 4.9 M4.9 0.5 L0.5 4.9" stroke="#e6ebf5" stroke-width="0.9"/></svg>
<div style="left:483.4px;top:53.7px;width:193.2px;height:15.1px;background:#cfd6e5;"></div>
<svg style="left:488.2px;top:58.1px" width="6" height="6" viewBox="0 0 6 6"><circle cx="3" cy="3" r="2.4" fill="#d6dbe8" stroke="#a9aec0" stroke-width="1.1"/><path d="M1.9 3 H4.1" stroke="#b9bece" stroke-width="0.8"/></svg>
<svg style="left:499px;top:58.1px" width="6" height="6" viewBox="0 0 6 6"><circle cx="3" cy="3" r="2.4" fill="#d6dbe8" stroke="#a9aec0" stroke-width="1.1"/><path d="M1.9 3 H4.1" stroke="#b9bece" stroke-width="0.8"/></svg>
<svg style="left:509.8px;top:57.7px" width="7" height="6.8" viewBox="0 0 7 6.8"><path d="M0.4 3.4 L3.5 0.5 L6.6 3.4 M1.3 2.8 V6.4 H5.7 V2.8" fill="#fff" stroke="#333" stroke-width="0.8"/><rect x="2.9" y="4" width="1.3" height="2.4" fill="#333"/></svg>
<svg style="left:521.3px;top:57.5px" width="7.4" height="7" viewBox="0 0 7.4 7"><path d="M0.4 2 H3 L3.6 2.8 H6.4 V6.4 H0.4 Z" fill="#f4f4f4" stroke="#555" stroke-width="0.6"/><path d="M1.2 4 H5.6 M1.2 5.2 H5.6" stroke="#888" stroke-width="0.4"/><circle cx="6" cy="1.4" r="1.3" fill="#d9982b"/></svg>
<svg style="left:532px;top:60.5px" width="2.6" height="1.6" viewBox="0 0 2.6 1.6"><path d="M0 0 H2.6 L1.3 1.6 Z" fill="#333"/></svg>
<div style="left:537.6px;top:56px;width:0.5px;height:10.5px;background:#aab4cc;"></div>
<div style="left:538.1px;top:56px;width:0.5px;height:10.5px;background:#dde3ef;"></div>
<svg style="left:542.6px;top:57.5px" width="7.8" height="7.4" viewBox="0 0 7.8 7.4"><circle cx="4.4" cy="4.2" r="2.5" fill="none" stroke="#555" stroke-width="0.7"/><path d="M4.4 2.8 V4.4 H5.6" fill="none" stroke="#555" stroke-width="0.6"/><path d="M0.2 0.4 L2.4 0.8 L1 2.6 Z" fill="#555"/></svg>
<svg style="left:553.6px;top:60.5px" width="2.6" height="1.6" viewBox="0 0 2.6 1.6"><path d="M0 0 H2.6 L1.3 1.6 Z" fill="#333"/></svg>
<svg style="left:559.8px;top:58.1px" width="6.4" height="6" viewBox="0 0 6.4 6"><path d="M1.6 1.6 H6.2 M0.2 4.4 H4.8" stroke="#222" stroke-width="0.9"/><path d="M0 1.6 L2 0 V3.2 Z M6.4 4.4 L4.4 2.8 V6 Z" fill="#222"/></svg>
<svg style="left:571px;top:58.1px" width="6.2" height="6" viewBox="0 0 6.2 6"><path d="M1.8 0.6 H5.6 V4 H1.8 Z M0.6 2 H4.4 V5.4 H0.6 Z" fill="#c3c9d8" stroke="#959db3" stroke-width="0.6"/></svg>
<svg style="left:581.4px;top:57.5px" width="7.4" height="7.2" viewBox="0 0 7.4 7.2"><rect x="0.6" y="0.6" width="5" height="5" rx="1" fill="#e1e5ef" stroke="#667087" stroke-width="0.7"/><rect x="2" y="2" width="5" height="5" rx="1" fill="#e9ecf4" stroke="#667087" stroke-width="0.7"/><path d="M3.4 4.6 A1.2 1.2 0 1 1 4.6 5.6" fill="none" stroke="#555" stroke-width="0.6"/></svg>
<div style="left:592.3px;top:56px;width:0.5px;height:10.5px;background:#aab4cc;"></div>
<div style="left:592.8px;top:56px;width:0.5px;height:10.5px;background:#dde3ef;"></div>
<svg style="left:597px;top:59.300000000000004px" width="5.6" height="3.6" viewBox="0 0 5.6 3.6"><path d="M2 0.3 L0.4 1.8 L2 3.3 M3.6 0.3 L5.2 1.8 L3.6 3.3" fill="none" stroke="#222" stroke-width="0.7"/></svg>
<svg style="left:607.2px;top:57.7px" width="7" height="6.8" viewBox="0 0 7 6.8"><path d="M0.8 6 L3.6 3.2" stroke="#111" stroke-width="1.5" stroke-linecap="round"/><path d="M6.6 1.4 A2 2 0 1 1 5.2 0.2 L4.6 1.6 L5.4 2.2 Z" fill="#111"/></svg>
<div style="left:616.2px;top:55.2px;width:10.8px;height:11.5px;background:#a9b2c9;"></div>
<div style="left:616.8px;top:55.8px;width:9.6px;height:10.3px;background:#fdfcf4;"></div>
<div style="left:619px;top:60.8px;width:2.2px;height:0.7px;background:#222;"></div>
<div style="left:621.2px;top:60.1px;width:3.8px;height:2.0px;background:#222;"></div>
<div style="left:483.4px;top:68.8px;width:193.2px;height:11.6px;background:#e4e8f1;"></div>
<div style="left:483.79999999999995px;top:69px;width:192.6px;height:8.8px;background:#fff;"></div>
<span class="t" style="left:486.6px;top:69px;font-size:6px;line-height:8px;color:#7a7a7a;letter-spacing:-0.067px;">Search Solution Explorer (Ctrl+;)</span>
<svg style="left:663.6px;top:70.4px" width="5.6" height="6" viewBox="0 0 5.6 6"><circle cx="3.4" cy="2.2" r="1.7" fill="none" stroke="#333" stroke-width="0.8"/><path d="M2.2 3.4 L0.4 5.4" stroke="#333" stroke-width="1"/></svg>
<svg style="left:671.6px;top:73.4px" width="2.2" height="1.3" viewBox="0 0 2.2 1.3"><path d="M0 0 H2.2 L1.1 1.3 Z" fill="#444"/></svg>
<div style="left:483.4px;top:80.4px;width:193.2px;height:316.0px;background:#fff;"></div>
<div style="left:483.4px;top:90px;width:193.2px;height:8.9px;background:#cdd1df;"></div>
<svg style="left:490px;top:82.69999999999999px" width="7.6" height="6.8" viewBox="0 0 7.6 6.8"><path d="M1 1.4 H6.8 V5.6 H3" fill="none" stroke="#555" stroke-width="0.7"/><path d="M1 0.6 H6.8" stroke="#333" stroke-width="1"/><path d="M0.2 3.6 L2.6 2.6 V6.6 L0.2 5.6 Z" fill="#5a52a8"/></svg>
<span class="t" style="left:500.6px;top:82px;font-size:6px;line-height:8px;color:#474747;letter-spacing:0.006px;">Solution 'Project6' (1 project)</span>
<svg style="left:490px;top:93.69999999999999px" width="2.8" height="2.8" viewBox="0 0 2.8 2.8"><path d="M2.8 0 V2.8 H0 Z" fill="#222"/></svg>
<svg style="left:499.4px;top:91.69999999999999px" width="6.6" height="6.8" viewBox="0 0 6.6 6.8"><rect x="0.3" y="0.3" width="6" height="6.2" fill="#fff" stroke="#c9a1ab" stroke-width="0.5"/><path d="M1.6 2 H2.8 M2.2 1.4 V2.6 M3.4 3.8 H5 M4.2 3 V4.6" stroke="#222" stroke-width="0.7"/></svg>
<span class="t" style="left:509.5px;top:91px;font-size:6px;line-height:8px;color:#1e1e1e;letter-spacing:-0.025px;font-weight:bold;">Project6</span>
<svg style="left:498px;top:101.6px" width="2.8" height="4.4" viewBox="0 0 2.8 4.4"><path d="M0.3 0.4 L2.4 2.2 L0.3 4 Z" fill="#fff" stroke="#555" stroke-width="0.5"/></svg>
<svg style="left:508px;top:102.39999999999999px" width="7" height="2.8" viewBox="0 0 7 2.8"><rect x="0" y="0.4" width="1.8" height="1.8" fill="#222"/><path d="M1.8 1.3 H3.8" stroke="#222" stroke-width="0.5"/><rect x="3.8" y="0" width="3" height="2.8" fill="#222"/></svg>
<span class="t" style="left:518.3px;top:100px;font-size:6px;line-height:8px;color:#474747;letter-spacing:-0.254px;">References</span>
<svg style="left:498px;top:110.5px" width="2.8" height="4.4" viewBox="0 0 2.8 4.4"><path d="M0.3 0.4 L2.4 2.2 L0.3 4 Z" fill="#fff" stroke="#555" stroke-width="0.5"/></svg>
<svg style="left:508px;top:109.3px" width="7" height="6.2" viewBox="0 0 7 6.2"><path d="M0.2 1 H2.6 L3.2 1.8 H6.6 V6 H0.2 Z" fill="#dcae6c"/><rect x="3.6" y="2.8" width="3.2" height="3.2" fill="#5b8fd6"/><path d="M4 3.6 L6.2 5.4 M6.2 3.6 L4 5.4" stroke="#fff" stroke-width="0.5"/></svg>
<span class="t" style="left:518.3px;top:109px;font-size:6px;line-height:8px;color:#474747;letter-spacing:-0.107px;">External Dependencies</span>
<svg style="left:508px;top:118.5px" width="7" height="6.2" viewBox="0 0 7 6.2"><path d="M0.2 1 H2.6 L3.2 1.8 H6.6 V6 H0.2 Z" fill="#dcae6c"/><path d="M0 2.6 H3 M0 4.2 H3" stroke="#8b5a2b" stroke-width="0.6"/></svg>
<span class="t" style="left:518.3px;top:118px;font-size:6px;line-height:8px;color:#474747;letter-spacing:-0.156px;">Header Files</span>
<svg style="left:508px;top:127.5px" width="7" height="6.2" viewBox="0 0 7 6.2"><path d="M0.2 1 H2.6 L3.2 1.8 H6.6 V6 H0.2 Z" fill="#dcae6c"/><path d="M0 2.6 H3 M0 4.2 H3" stroke="#8b5a2b" stroke-width="0.6"/></svg>
<span class="t" style="left:518.3px;top:127px;font-size:6px;line-height:8px;color:#474747;letter-spacing:-0.24px;">Resource Files</span>
<svg style="left:499.4px;top:138.4px" width="2.8" height="2.8" viewBox="0 0 2.8 2.8"><path d="M2.8 0 V2.8 H0 Z" fill="#222"/></svg>
<svg style="left:508px;top:136.8px" width="7" height="6.2" viewBox="0 0 7 6.2"><path d="M0.4 0.8 H6.4 V5.8 H0.4 Z" fill="#fbf6ea" stroke="#c9b48a" stroke-width="0.5"/><path d="M1.2 5 L2.6 3.4 L4 4.4 L4.6 5 Z" fill="#c98a3a"/></svg>
<span class="t" style="left:518.3px;top:136px;font-size:6px;line-height:8px;color:#474747;letter-spacing:-0.168px;">Source Files</span>
<svg style="left:507.3px;top:146.4px" width="2.8" height="4.4" viewBox="0 0 2.8 4.4"><path d="M0.3 0.4 L2.4 2.2 L0.3 4 Z" fill="#fff" stroke="#555" stroke-width="0.5"/></svg>
<svg style="left:517.8px;top:146.79999999999998px" width="5.6" height="3.6" viewBox="0 0 5.6 3.6"><path d="M1 0.2 V2 M0.2 0.6 L1.8 1.6 M1.8 0.6 L0.2 1.6" stroke="#444" stroke-width="0.45"/><path d="M3 2 H5.4 M4.2 0.8 V3.2" stroke="#222" stroke-width="0.8"/></svg>
<span class="t" style="left:527.4px;top:144px;font-size:6px;line-height:8px;color:#474747;letter-spacing:-0.195px;">Source.cpp</span>
<div style="left:483.4px;top:396.4px;width:50.1px;height:9.4px;background:#fff;"></div>
<span class="t" style="left:486.5px;top:397px;font-size:6px;line-height:8px;color:#686868;letter-spacing:-0.043px;">Solution Explorer</span>
<div style="left:535.3px;top:396.6px;width:41.7px;height:9.2px;background:#4d6082;"></div>
<span class="t" style="left:537.6px;top:397px;font-size:6px;line-height:8px;color:#fff;letter-spacing:-0.124px;">Team Explorer</span>
<span class="t" style="left:3px;top:410px;font-size:6px;line-height:8px;color:#fff;letter-spacing:-0.149px;text-shadow:0 0 0.3px #fff;">Error List</span>
<span class="t" style="left:32px;top:410px;font-size:6px;line-height:8px;color:#fff;letter-spacing:0.198px;text-shadow:0 0 0.3px #fff;">Output</span>
<div style="left:3px;top:418.4px;width:23px;height:2.4px;background:#3f5378;"></div>
<div style="left:32px;top:418.4px;width:19px;height:2.4px;background:#3f5378;"></div>
<div style="left:0px;top:420.8px;width:680px;height:11.8px;background:#007acc;"></div>
<div style="left:0px;top:432.6px;width:680px;height:1.4px;background:#1b2438;"></div>
<svg style="left:2px;top:424px" width="8.4" height="6.4" viewBox="0 0 8.4 6.4"><path d="M2 0.6 H8 L6.4 5.8 H0.4 Z" fill="none" stroke="#fff" stroke-width="0.9"/></svg>
<span class="t" style="left:14px;top:424px;font-size:6px;line-height:8px;color:#fff;letter-spacing:-0.336px;">Ready</span>
<span class="t" style="left:302px;top:424px;font-size:6px;line-height:8px;color:#fff;letter-spacing:-0.07px;">Ln 108</span>
<span class="t" style="left:347.7px;top:424px;font-size:6px;line-height:8px;color:#fff;letter-spacing:0.023px;">Col 1</span>
<span class="t" style="left:393.5px;top:424px;font-size:6px;line-height:8px;color:#fff;letter-spacing:-0.058px;">Ch 1</span>
<span class="t" style="left:461.3px;top:424px;font-size:6px;line-height:8px;color:#fff;letter-spacing:-0.401px;">INS</span>
<svg style="left:598px;top:425px" width="4.4" height="5.4" viewBox="0 0 4.4 5.4"><path d="M2.2 0 L4.4 2.4 H2.8 V5.4 H1.6 V2.4 H0 Z" fill="#fff"/></svg>
<span class="t" style="left:606.6px;top:424px;font-size:6px;line-height:8px;color:#fff;letter-spacing:0.018px;">Add to Source Control</span>
<svg style="left:669px;top:426.4px" width="3.4" height="2" viewBox="0 0 3.4 2"><path d="M0 2 H3.4 L1.7 0 Z" fill="#fff"/></svg>
</div></body></html>
